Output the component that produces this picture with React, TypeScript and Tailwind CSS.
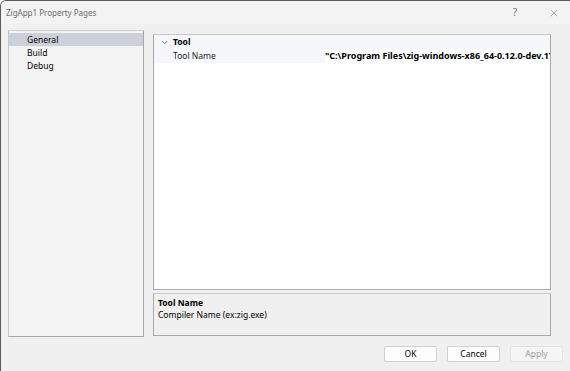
import { ChevronDown, X } from "lucide-react";

const pages = ["General", "Build", "Debug"];

export default function App() {
    return (
        <div className="w-[570px] h-[371px] bg-[#f0f0f0] border-t border-l border-[#5a5a5a] rounded-tl-[6px] overflow-hidden flex flex-col text-[8.5px] text-black font-['Segoe_UI','Noto_Sans',sans-serif]">
            <div className="h-[23px] shrink-0 bg-[#f3f3f3] flex items-center pl-[5px]">
                <span className="flex-1 text-[#6b6b6b] text-[8px]">ZigApp1 Property Pages</span>
                <span className="w-[46px] text-center text-[#6b6b6b] text-[10px]">?</span>
                <span className="w-[32px] flex justify-center text-[#777]">
                    <X className="w-[12px] h-[12px]" strokeWidth={1.2} />
                </span>
            </div>

            <div className="flex gap-[9px] pl-[7px] pt-[6px]">
                <div className="w-[136px] h-[307px] bg-[#f3f3f3] border border-[#a8a8a8] border-t-[#d0d0d0] border-l-[#c8c8c8] pt-[2px]">
                    {pages.map((p, i) => (
                        <div
                            key={p}
                            className={`h-[13px] leading-[13px] pl-[18px] ${i === 0 ? "bg-[#cdcfdb]" : ""}`}
                        >
                            {p}
                        </div>
                    ))}
                </div>

                <div className="w-[398px] flex flex-col gap-[3px] pt-[4px]">
                    <div className="h-[256px] bg-white border border-[#a8a8a8] border-t-[#c8c8c8]">
                        <div className="bg-[#f5f7fb]">
                            <div className="h-[14px] flex items-center">
                                <span className="w-[19px] flex justify-center pl-[2px] text-[#444]">
                                    <ChevronDown className="w-[9px] h-[9px]" strokeWidth={2} />
                                </span>
                                <span className="font-bold">Tool</span>
                            </div>
                            <div className="h-[14px] flex">
                                <span className="w-[171px] pl-[19px] leading-[14px] text-[#222]">Tool Name</span>
                                <span className="flex-1 bg-white font-bold text-[9px] leading-[14px] whitespace-nowrap overflow-hidden">
                                    "C:\Program Files\zig-windows-x86_64-0.12.0-dev.1717
                                </span>
                            </div>
                        </div>
                    </div>

                    <div className="h-[43px] border border-[#a8a8a8] border-t-[#c8c8c8] bg-[#f0f0f0] px-[4px] pt-[3px] leading-[12px]">
                        <div className="font-bold">Tool Name</div>
                        <div>Compiler Name (ex:zig.exe)</div>
                    </div>
                </div>
            </div>

            <div className="flex justify-end gap-[10px] pr-[7px] mt-[9px]">
                <button className="w-[53px] h-[16px] bg-[#fdfdfd] border border-[#d0d0d0] rounded-[2px] text-[8.5px]">OK</button>
                <button className="w-[53px] h-[16px] bg-[#fdfdfd] border border-[#d0d0d0] rounded-[2px] text-[8.5px]">Cancel</button>
                <button className="w-[53px] h-[16px] bg-[#f5f5f5] border border-[#e4e4e4] rounded-[2px] text-[8.5px] text-[#a0a0a0]">Apply</button>
            </div>
        </div>
    );
}
